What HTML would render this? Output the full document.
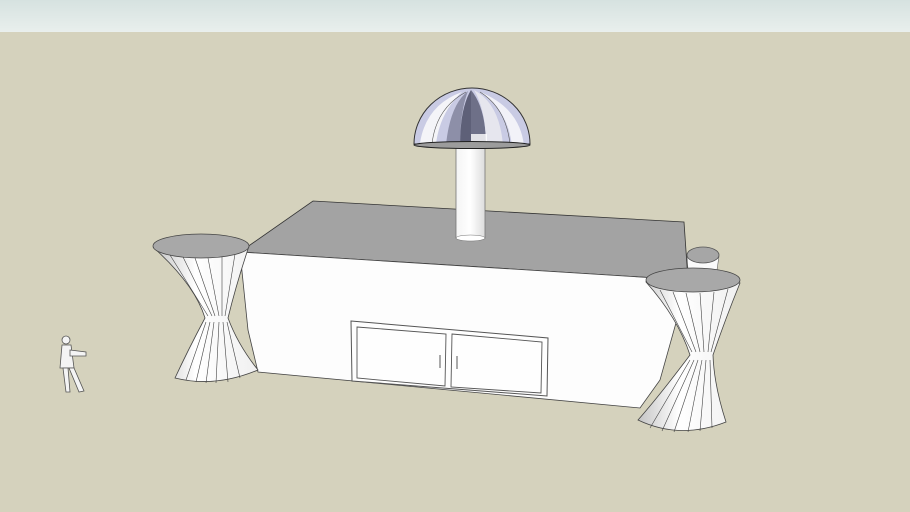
<!DOCTYPE html>
<html><head><style>html,body{margin:0;padding:0;width:910px;height:512px;overflow:hidden;background:#d5d2bd}</style></head>
<body>
<svg width="910" height="512" viewBox="0 0 910 512" xmlns="http://www.w3.org/2000/svg">
<defs>
<linearGradient id="sky" x1="0" y1="0" x2="0" y2="1"><stop offset="0" stop-color="#d6e2e0"/><stop offset="1" stop-color="#e9efed"/></linearGradient>
<linearGradient id="hg" x1="0" y1="0" x2="1" y2="0"><stop offset="0" stop-color="#c4c4c4"/><stop offset="0.4" stop-color="#ffffff"/><stop offset="1" stop-color="#f0f0f0"/></linearGradient>
<linearGradient id="pole" x1="0" y1="0" x2="1" y2="0"><stop offset="0" stop-color="#f4f4f4"/><stop offset="0.5" stop-color="#ffffff"/><stop offset="1" stop-color="#dcdcdc"/></linearGradient>
</defs>
<rect x="0" y="0" width="910" height="32" fill="url(#sky)"/>
<rect x="0" y="32" width="910" height="480" fill="#d5d2bd"/>
<!-- back right table -->
<path d="M687,256 L719,256 L717,270 L688,270 Z" fill="#fafafa" stroke="#666" stroke-width="0.6"/>
<ellipse cx="703" cy="255" rx="16" ry="8" fill="#a6a6a6" stroke="#555" stroke-width="0.8"/>
<!-- top face -->
<polygon points="240,252 313,201 684,222 688,280" fill="#a3a3a3" stroke="#333" stroke-width="0.8"/>
<!-- front face -->
<polygon points="240,252 688,280 660,380 640,408 258,372 248,330" fill="#fdfdfd" stroke="#444" stroke-width="0.8"/>
<!-- doors -->
<polygon points="351,321 548,338 547,396 352,381" fill="#fefefe" stroke="#555" stroke-width="1"/>
<polygon points="357,327 446,334 445,386 357,378" fill="none" stroke="#555" stroke-width="0.9"/>
<polygon points="452,334 542,342 541,393 451,387" fill="none" stroke="#555" stroke-width="0.9"/>
<line x1="440" y1="355" x2="440" y2="368" stroke="#555"/>
<line x1="457" y1="356" x2="457" y2="369" stroke="#555"/>
<!-- pole -->
<rect x="456" y="146" width="29" height="92" fill="url(#pole)" stroke="#777" stroke-width="0.8"/>
<ellipse cx="470.5" cy="238" rx="14.5" ry="3" fill="#fff" stroke="#777" stroke-width="0.6"/>
<!-- dome -->
<path d="M414,144 A58,56 0 0 1 530,144 Z" fill="#c9cbe4" stroke="#333" stroke-width="1"/>
<path d="M420,143 Q426,105 462,92 Q440,112 436,144 Z" fill="#f4f4f8"/>
<path d="M446,145 Q450,105 468,91 Q460,112 460,146 Z" fill="#8d8fa8"/>
<path d="M460,146 Q460,108 471,90 L471,146 Z" fill="#5e6078"/>
<path d="M471,146 L471,90 Q486,108 486,146 Z" fill="#6e7088"/>
<path d="M486,146 Q486,110 474,90 Q500,104 503,146 Z" fill="#e6e6ee"/>
<path d="M512,146 Q508,110 480,92 Q520,108 524,146 Z" fill="#f2f2f8"/>
<path d="M432,144 Q436,108 466,92" fill="none" stroke="#555" stroke-width="0.6"/>
<path d="M510,144 Q506,108 480,92" fill="none" stroke="#555" stroke-width="0.6"/>
<rect x="471" y="134" width="16" height="12" fill="#ffffff" opacity="0.8"/>
<ellipse cx="472" cy="145" rx="58" ry="3.5" fill="#9c9c9c" stroke="#222" stroke-width="1"/>
<!-- left table -->
<path d="M154,248 Q195,285 205,318 Q188,350 175,378 Q215,388 258,370 Q238,345 228,318 Q236,285 249,246 Z" fill="url(#hg)" stroke="#444" stroke-width="0.8"/>
<g stroke="#444" stroke-width="0.6">
<line x1="170" y1="255" x2="208" y2="316"/><line x1="183" y1="257" x2="212" y2="316"/><line x1="195" y1="258" x2="215" y2="316"/><line x1="208" y1="258" x2="219" y2="316"/><line x1="222" y1="257" x2="222" y2="316"/><line x1="235" y1="254" x2="225" y2="316"/>
<line x1="206" y1="322" x2="186" y2="380"/><line x1="210" y1="322" x2="196" y2="382"/><line x1="214" y1="322" x2="206" y2="383"/><line x1="219" y1="322" x2="216" y2="383"/><line x1="223" y1="322" x2="228" y2="382"/><line x1="227" y1="322" x2="240" y2="378"/>
</g>
<ellipse cx="201" cy="246" rx="48" ry="12" fill="#a8a8a8" stroke="#444" stroke-width="0.8"/>
<!-- right table -->
<path d="M646,282 Q678,318 690,355 Q660,395 638,420 Q680,440 726,422 Q714,385 713,355 Q725,320 740,283 Z" fill="url(#hg)" stroke="#444" stroke-width="0.8"/>
<g stroke="#444" stroke-width="0.6">
<line x1="660" y1="290" x2="692" y2="352"/><line x1="673" y1="292" x2="696" y2="352"/><line x1="686" y1="293" x2="700" y2="352"/><line x1="700" y1="293" x2="704" y2="352"/><line x1="714" y1="292" x2="708" y2="352"/><line x1="728" y1="289" x2="711" y2="352"/>
<line x1="690" y1="360" x2="650" y2="428"/><line x1="694" y1="360" x2="662" y2="431"/><line x1="698" y1="360" x2="674" y2="432"/><line x1="702" y1="360" x2="688" y2="432"/><line x1="706" y1="360" x2="700" y2="431"/><line x1="710" y1="360" x2="712" y2="428"/>
</g>
<ellipse cx="693" cy="280" rx="47" ry="12" fill="#a8a8a8" stroke="#444" stroke-width="0.8"/>
<!-- person -->
<g fill="#f4f4f4" stroke="#555" stroke-width="0.8">
<circle cx="66" cy="340" r="4"/>
<path d="M62,345 L71,345 L74,368 L60,368 Z"/>
<path d="M70,350 L86,352 L86,356 L70,356 Z"/>
<path d="M63,368 L68,368 L70,392 L66,392 Z"/>
<path d="M69,368 L74,368 L84,391 L79,392 Z"/>
</g>
</svg>
</body></html>
